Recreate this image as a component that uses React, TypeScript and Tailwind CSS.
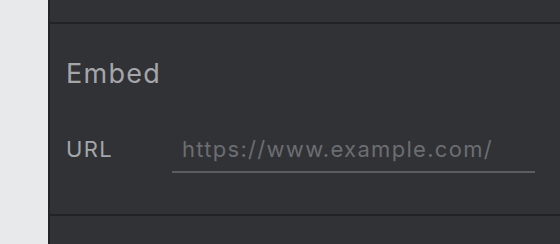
import React from "react";

export default function App() {
  return (
    <div className="flex h-[244px] w-[560px] overflow-hidden bg-[#e8e9eb]" style={{ fontFamily: "Inter, 'Noto Sans', sans-serif" }}>
      <div className="w-[48px] shrink-0" />
      <div className="flex flex-1 flex-col border-l-2 border-[#222324] bg-[#313236]">
        <div className="h-[24px] shrink-0 border-b-2 border-[#222324]" />
        <div className="flex h-[192px] shrink-0 flex-col border-b-2 border-[#222324] pl-[16px] pt-[34px]">
          <div className="text-[27px] leading-[32px] tracking-[1.3px] text-[#a5a6aa]">Embed</div>
          <div className="mt-[45px] flex items-start">
            <div className="w-[106px] shrink-0 text-[22px] leading-[28px] tracking-[1.3px] text-[#a5a6aa]">URL</div>
            <div className="mr-[25px] flex-1 border-b-2 border-[#5c5d61] pb-[8px]">
              <input
                className="h-[28px] w-full bg-transparent pl-[10px] text-[22px] leading-[28px] tracking-[1.3px] text-[#a5a6aa] outline-none placeholder:text-[#6c6d71]"
                placeholder="https://www.example.com/"
              />
            </div>
          </div>
        </div>
        <div className="flex-1" />
      </div>
    </div>
  );
}
